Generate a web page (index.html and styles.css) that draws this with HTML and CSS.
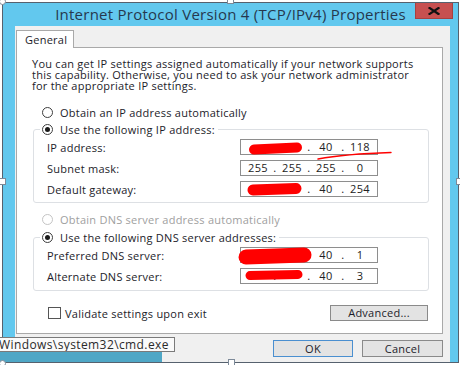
FILE: index.html
```html
<!DOCTYPE html>
<html lang="en">
<head>
    <meta charset="UTF-8">
    <meta name="viewport" content="width=device-width, initial-scale=1.0">
    <title>Internet Protocol Version 4 (TCP/IPv4) Properties</title>
    <link rel="stylesheet" href="styles.css">
</head>
<body>
    <div class="window">
        <div class="titlebar">
            <span></span>
            <div class="title">Internet Protocol Version 4 (TCP/IPv4) Properties</div>
            <button class="close" aria-label="Close">
                <svg width="12" height="8" viewBox="0 0 12 8"><path d="M1.5 1 L10.5 7 M10.5 1 L1.5 7" stroke="#111" stroke-width="2.2" stroke-linecap="square"/></svg>
            </button>
        </div>

        <div class="client">
            <div class="tabs"><div class="tab">General</div></div>

            <div class="panel">
                <p class="intro">You can get IP settings assigned automatically if your network supports<br>this capability. Otherwise, you need to ask your network administrator<br>for the appropriate IP settings.</p>

                <div class="option first"><span class="radio"></span>Obtain an IP address automatically</div>

                <fieldset class="group">
                    <legend><span class="option"><span class="radio on"></span>Use the following IP address:</span></legend>
                    <div class="rows">
                        <label>IP address:</label>
                        <div class="ipbox"><span></span><i>.</i><span></span><i>.</i><span>40</span><i>.</i><span>118</span></div>
                        <label>Subnet mask:</label>
                        <div class="ipbox"><span>255</span><i>.</i><span>255</span><i>.</i><span>255</span><i>.</i><span>0</span></div>
                        <label>Default gateway:</label>
                        <div class="ipbox"><span></span><i>.</i><span></span><i>.</i><span>40</span><i>.</i><span>254</span></div>
                    </div>
                </fieldset>

                <div class="option dns-auto"><span class="radio off"></span>Obtain DNS server address automatically</div>

                <fieldset class="group dns">
                    <legend><span class="option"><span class="radio on"></span>Use the following DNS server addresses:</span></legend>
                    <div class="rows">
                        <label>Preferred DNS server:</label>
                        <div class="ipbox"><span></span><i>.</i><span></span><i></i><span>40</span><i>.</i><span>1</span></div>
                        <label>Alternate DNS server:</label>
                        <div class="ipbox"><span></span><i>.</i><span></span><i>.</i><span>40</span><i>.</i><span>3</span></div>
                    </div>
                </fieldset>

                <div class="settings">
                    <div class="check"><span class="box"></span>Validate settings upon exit</div>
                    <button class="btn advanced">Advanced...</button>
                </div>
            </div>

            <div class="buttons">
                <button class="btn ok">OK</button>
                <button class="btn">Cancel</button>
            </div>
        </div>
    </div>

    <!-- stuff lying over the dialog: taskbar tooltip, scribbles, editor handles -->
    <div class="strip"></div>
    <div class="tooltip">Windows\system32\cmd.exe</div>

    <svg class="scribble" width="460" height="365" viewBox="0 0 460 365">
        <g stroke="#ff0000" stroke-linecap="round" fill="none">
            <path d="M254 149.5 L297 147.5" stroke-width="10"/>
            <path d="M253 190 L296 188.5" stroke-width="11"/>
            <path d="M246 257 L304 255" stroke-width="15"/>
            <path d="M250 275.5 L298 274.5" stroke-width="9"/>
            <path d="M318 159 Q345 154 391 152.5" stroke-width="1.4"/>
        </g>
    </svg>

    <span class="handle dot tl"></span>
    <span class="handle dot bl"></span>
    <span class="handle sq lm"></span>
    <span class="handle sq rm"></span>
    <span class="handle sq tm"></span>
    <span class="handle sq bm"></span>
</body>
</html>
```

FILE: styles.css
```css
* {
    box-sizing: border-box;
}
body {
    margin: 0;
    width: 460px;
    height: 365px;
    overflow: hidden;
    position: relative;
    background: #fff;
    font-family: "Open Sans", "Segoe UI", sans-serif;
    font-size: 11px;
    letter-spacing: 0.25px;
    color: #1c1c2a;
}
.window {
    margin: 2px 0 0 2px;
    width: 457px;
    height: 361px;
    border: 1px solid #56616e;
    background: #62c8ee;
    display: flex;
    flex-direction: column;
}
.titlebar {
    height: 23px;
    flex: none;
    display: grid;
    grid-template-columns: 1fr auto 1fr;
    align-items: start;
}
.title {
    line-height: 22px;
    font-size: 15px;
    letter-spacing: 0.25px;
    color: #26384e;
    white-space: nowrap;
}
.close {
    justify-self: end;
    width: 38px;
    height: 16px;
    margin-right: 5px;
    padding: 0;
    border: 1px solid #a84040;
    border-top: none;
    background: #c75050;
    display: flex;
    align-items: center;
    justify-content: center;
}
.client {
    flex: 1;
    margin: 0 8px 0 12px;
    padding: 4px 7px 0 1px;
    background: #f0f0f0;
}
.tabs {
    display: flex;
}
.tab {
    position: relative;
    z-index: 1;
    width: 58px;
    height: 18px;
    margin-bottom: -1px;
    padding-left: 8px;
    line-height: 17px;
    background: #fff;
    border: 1px solid #a9a9a9;
    border-bottom: none;
}
.panel {
    height: 287px;
    padding: 9.5px 13px 0 15px;
    background: #fff;
    border: 1px solid #a9a9a9;
}
.intro {
    margin: 0;
    line-height: 11px;
    white-space: nowrap;
}
.option {
    display: flex;
    align-items: center;
    gap: 7px;
    height: 13px;
    line-height: 13px;
    white-space: nowrap;
}
.option.first {
    margin: 15px 0 0 10px;
}
.option.dns-auto {
    margin: 9.5px 0 0 10px;
    color: #a0a0a0;
}
.radio {
    flex: none;
    width: 11px;
    height: 11px;
    border: 1px solid #3e3e3e;
    border-radius: 50%;
    background: #fff;
    display: flex;
    align-items: center;
    justify-content: center;
}
.radio.on::after {
    content: "";
    width: 5px;
    height: 5px;
    border-radius: 50%;
    background: #1a1a1a;
}
.radio.off {
    border-color: #c4c4c4;
}
.group {
    margin: 4px 0 0 1px;
    padding: 3.5px 0 5px 0;
    border: 1px solid #dde0e4;
    border-radius: 3px;
    min-width: 0;
}
.group.dns {
    margin-top: 5px;
    padding-bottom: 6px;
}
.group legend {
    margin-left: 6px;
    padding: 0 3px 0 2px;
}
.rows {
    display: grid;
    grid-template-columns: 193px 138px;
    grid-auto-rows: 16px;
    row-gap: 5px;
    align-items: center;
    padding-left: 13px;
}
.ipbox {
    height: 16px;
    padding-left: 3px;
    display: flex;
    line-height: 14px;
    letter-spacing: 0.4px;
    background: #fff;
    border: 1px solid #8e8e8e;
    color: #222;
}
.ipbox span {
    width: 28px;
    text-align: center;
}
.ipbox i {
    width: 6px;
    text-align: center;
    font-style: normal;
}
.settings {
    margin: 14px 1px 0 0;
    display: flex;
    justify-content: space-between;
    align-items: center;
}
.check {
    margin-left: 16px;
    display: flex;
    align-items: center;
    gap: 4px;
}
.box {
    width: 13px;
    height: 12px;
    border: 1px solid #555;
    background: #fff;
}
.btn {
    height: 17px;
    padding: 0;
    font-family: inherit;
    font-size: 11px;
    letter-spacing: 0.25px;
    line-height: 14px;
    color: #1c1c2a;
    background: #e3e3e3;
    border: 1px solid #8a8a8a;
}
.btn.advanced {
    width: 98px;
    height: 16px;
}
.buttons {
    margin-top: 6px;
    display: flex;
    justify-content: flex-end;
    gap: 9px;
}
.buttons .btn {
    width: 81px;
}
.buttons .btn.ok {
    width: 80px;
    border-color: #4a8fd0;
}
.strip {
    position: absolute;
    left: 0;
    top: 352px;
    width: 162px;
    height: 10px;
    background: #4fa7c6;
}
.tooltip {
    position: absolute;
    left: 0;
    top: 337px;
    width: 175px;
    height: 15px;
    border: 1px solid #7a7a7a;
    border-left: none;
    background: #fafafa;
    font-size: 12px;
    letter-spacing: 0.4px;
    line-height: 13px;
    text-indent: -1px;
    white-space: nowrap;
    overflow: hidden;
    color: #2a2a2a;
}
.scribble {
    position: absolute;
    left: 0;
    top: 0;
    pointer-events: none;
}
.handle {
    position: absolute;
    width: 7px;
    height: 7px;
    background: #fff;
    border: 1px solid #7d8a99;
}
.handle.dot {
    border-radius: 50%;
}
.tl { left: -1px; top: -2px; }
.bl { left: -1px; top: 360px; }
.lm { left: -1px; top: 178px; }
.rm { left: 456px; top: 178px; }
.tm { left: 227px; top: -3px; }
.bm { left: 228px; top: 359px; }
```
